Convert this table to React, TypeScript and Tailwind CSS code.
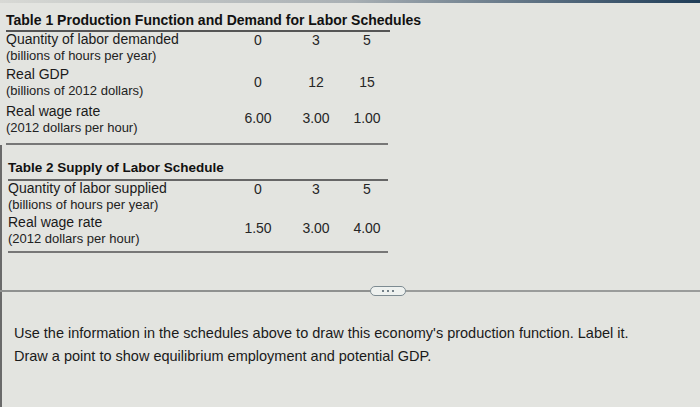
const font = { fontFamily: '"Liberation Sans", Arial, sans-serif' };

type Row = { label: string; sub: string; values: string[]; numTop: string; h: string };

const demand: Row[] = [
  { label: "Quantity of labor demanded", sub: "(billions of hours per year)", values: ["0", "3", "5"], numTop: "pt-[0px]", h: "h-[35px]" },
  { label: "Real GDP", sub: "(billions of 2012 dollars)", values: ["0", "12", "15"], numTop: "pt-[7px]", h: "h-[37px]" },
  { label: "Real wage rate", sub: "(2012 dollars per hour)", values: ["6.00", "3.00", "1.00"], numTop: "pt-[6px]", h: "h-[37px]" }
];

const supply: Row[] = [
  { label: "Quantity of labor supplied", sub: "(billions of hours per year)", values: ["0", "3", "5"], numTop: "pt-[0px]", h: "h-[34px]" },
  { label: "Real wage rate", sub: "(2012 dollars per hour)", values: ["1.50", "3.00", "4.00"], numTop: "pt-[5px]", h: "h-[35px]" }
];

const colW = ["w-[56px]", "w-[60px]", "w-[42px]"];

function ScheduleRow({ row, labelW }: { row: Row; labelW: string }) {
  return (
    <div className={`flex ${row.h}`}>
      <div className={labelW}>
        <div className="text-[14px] leading-[14px] text-[#1a1a1a]">{row.label}</div>
        <div className="text-[13px] leading-[20px] text-[#222]">{row.sub}</div>
      </div>
      {row.values.map((v, i) => (
        <div key={i} className={`${colW[i]} ${row.numTop} text-center text-[14px] leading-[16px] text-[#262626]`}>
          {v}
        </div>
      ))}
    </div>
  );
}

export default function App() {
  return (
    <div className="flex h-[407px] w-[700px] flex-col overflow-hidden bg-[#e3e4e0]" style={font}>
      <div className="h-[3px] w-full bg-gradient-to-r from-[#d8d9d5] via-[#a9b0b4] to-[#1f3d58]" />

      <div className="pl-[6px] pt-[9px]">
        <div className="text-[14px] font-bold leading-[17px] text-[#111]">
          Table 1 Production Function and Demand for Labor Schedules
        </div>
        <div className="mt-[1px] w-[384px] border-b-[2px] border-[#555]" />
        <div>
          {demand.map((r) => (
            <ScheduleRow key={r.label} row={r} labelW="w-[224px]" />
          ))}
        </div>
        <div className="mt-[2px] w-[382px] border-b-[2px] border-[#777]" />
      </div>

      <div className="flex-1 border-l-[2px] border-[#6a6a6a] pl-[6px] pt-[14px]">
        <div className="text-[13.5px] font-bold leading-[17px] text-[#111]">Table 2 Supply of Labor Schedule</div>
        <div className="mt-[3px] w-[380px] border-b-[2px] border-[#666]" />
        <div>
          {supply.map((r) => (
            <ScheduleRow key={r.label} row={r} labelW="w-[222px]" />
          ))}
        </div>
        <div className="mt-[1px] w-[380px] border-b-[2px] border-[#777]" />

        <div className="-ml-[8px] mt-[33px] flex items-center">
          <div className="h-[2px] w-[370px] bg-[#8f9190]" />
          <div className="flex h-[10px] w-[36px] items-center justify-center gap-[3px] rounded-full border border-[#7d8b92] bg-[#eef1ef]">
            <span className="h-[2px] w-[2px] rounded-full bg-[#4a5a66]" />
            <span className="h-[2px] w-[2px] rounded-full bg-[#4a5a66]" />
            <span className="h-[2px] w-[2px] rounded-full bg-[#4a5a66]" />
          </div>
          <div className="h-[2px] flex-1 bg-[#9a9c9b]" />
        </div>

        <div className="pl-[6px] pt-[26px] text-[14.5px] leading-[23px] text-[#1a1a1a]">
          <p>Use the information in the schedules above to draw this economy's production function. Label it.</p>
          <p>Draw a point to show equilibrium employment and potential GDP.</p>
        </div>
      </div>
    </div>
  );
}
